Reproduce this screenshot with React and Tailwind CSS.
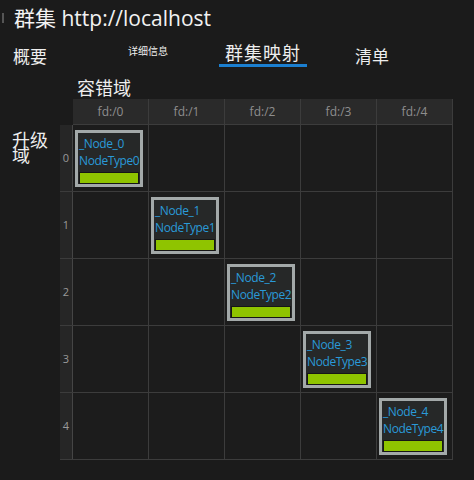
const cols = [0, 1, 2, 3, 4]
const rows = [0, 1, 2, 3, 4]

function NodeBox({ n }) {
  return (
    <div className="mt-[5px] ml-[2px] w-[68px] h-[57px] border-[3px] border-[#a3a9a9] bg-[#262828] px-[1px] flex flex-col">
      <div className="text-[12px] leading-[17px] pt-[2px] font-medium tracking-[-0.4px] text-[#2a9ad8]">_Node_{n}</div>
      <div className="text-[12px] leading-[17px] font-medium tracking-[-0.4px] text-[#2a9ad8]">NodeType{n}</div>
      <div className="mt-[3px] h-[12px] border border-[#161616] bg-[#8fc400]" />
    </div>
  )
}

export default function App() {
  return (
    <div
      className="w-[474px] h-[480px] bg-[#1b1b1b] text-white overflow-hidden"
      style={{ fontFamily: '"Open Sans", "Noto Sans CJK SC", sans-serif' }}
    >
      {/* title */}
      <div className="flex items-center h-[36px] pl-[2px]">
        <div className="w-[2px] h-[10px] bg-[#555] mr-[10px]" />
        <span className="text-[21px] leading-none text-[#f2f2f2]">群集 http://localhost</span>
      </div>

      {/* tabs */}
      <div className="relative h-[32px] text-[#eeeeee]">
        <span className="absolute left-[13px] top-[8px] text-[17px]">概要</span>
        <span className="absolute left-[128px] top-[8px] text-[10px]">详细信息</span>
        <div className="absolute left-[219px] top-[6px] w-[88px] flex flex-col items-center">
          <span className="text-[18px] leading-[22px] tracking-[1px]">群集映射</span>
          <div className="w-full h-[3px] bg-[#1b7fd0]" />
        </div>
        <span className="absolute left-[355px] top-[8px] text-[17px]">清单</span>
      </div>

      {/* fault domain label */}
      <div className="h-[31px] pl-[77px] pt-[9px] text-[18px] leading-[22px] text-[#eeeeee]">容错域</div>

      <div className="flex">
        <div className="w-[60px] pl-[12px] pt-[34px] pr-[10px] text-[18px] leading-[15px] text-[#eeeeee]">升级域</div>

        <div className="flex flex-col">
          {/* column header */}
          <div className="flex ml-[13px] h-[26px] bg-[#2a2a2a] border-b border-[#3c3c3c]">
            {cols.map(c => (
              <div
                key={c}
                className="w-[76px] flex items-center justify-center border-r border-[#3c3c3c] text-[12px] text-[#8e8e8e]"
              >
                fd:/{c}
              </div>
            ))}
          </div>

          {rows.map(r => (
            <div key={r} className="flex h-[67px] border-b border-[#3c3c3c]">
              <div className="w-[13px] bg-[#262626] border-r border-[#454545] flex items-center justify-center text-[11px] text-[#9a9a9a]">
                {r}
              </div>
              {cols.map(c => (
                <div key={c} className="w-[76px] border-r border-[#3c3c3c] bg-[#1c1c1c]">
                  {r === c && <NodeBox n={c} />}
                </div>
              ))}
            </div>
          ))}
        </div>
      </div>
    </div>
  )
}
